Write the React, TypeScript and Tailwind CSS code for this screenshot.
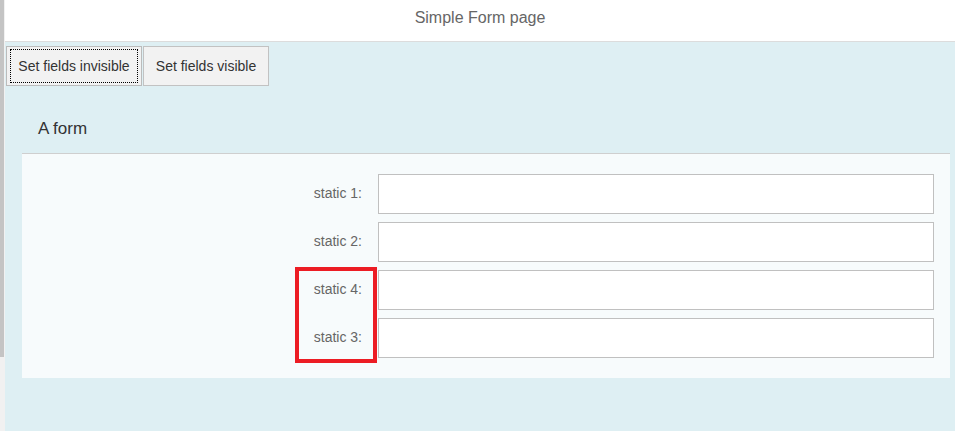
import React from "react";

const fields = ["static 1:", "static 2:", "static 4:", "static 3:"];

const App: React.FC = () => {
  return (
    <div className="flex h-[431px] w-[955px] overflow-hidden font-['Liberation_Sans',Arial,sans-serif]">
      {/* left scrollbar strip */}
      <div className="flex w-[5px] flex-col bg-[#f1f1f1]">
        <div className="h-[357px] w-[4px] bg-[#c4c4c4]" />
      </div>

      <div className="flex flex-1 flex-col bg-[#deeff3]">
        {/* header */}
        <div className="flex h-[42px] items-center justify-center border-b border-[#dcdcdc] bg-white pb-[6px] text-[16px] text-[#666]">
          Simple Form page
        </div>

        {/* toolbar */}
        <div className="flex pl-[1px] pt-[4px]">
          <button className="flex h-10 w-[136px] items-center justify-center border border-[#bbb] bg-[#f2f2f2] px-[3px] text-[14px] text-[#333]">
            <span className="flex h-[34px] w-full items-center justify-center border border-dotted border-black">
              Set fields invisible
            </span>
          </button>
          <button className="ml-[1px] flex h-10 w-[126px] items-center justify-center border border-[#c2c2c2] bg-[#f2f2f2] text-[14px] text-[#333]">
            Set fields visible
          </button>
        </div>

        {/* form section */}
        <div className="ml-[17px] mr-[5px] mt-[30px]">
          <h2 className="pb-[11px] pl-[16px] text-[17px] text-[#333]">A form</h2>
          <div className="relative flex flex-col gap-2 border-t border-[#cfcfcf] bg-[#f7fbfc] pb-[20px] pl-4 pr-4 pt-[20px]">
            {fields.map((label) => (
              <div key={label} className="flex items-center justify-end gap-4">
                <span className="text-[14px] text-[#666]">{label}</span>
                <input className="h-10 w-[556px] border border-[#c0c0c0] bg-white outline-none" />
              </div>
            ))}
            <div className="pointer-events-none absolute left-[273px] top-[113px] h-[96px] w-[82px] border-[4px] border-[#ec1c24]" />
          </div>
        </div>
      </div>
    </div>
  );
};

export default App;
